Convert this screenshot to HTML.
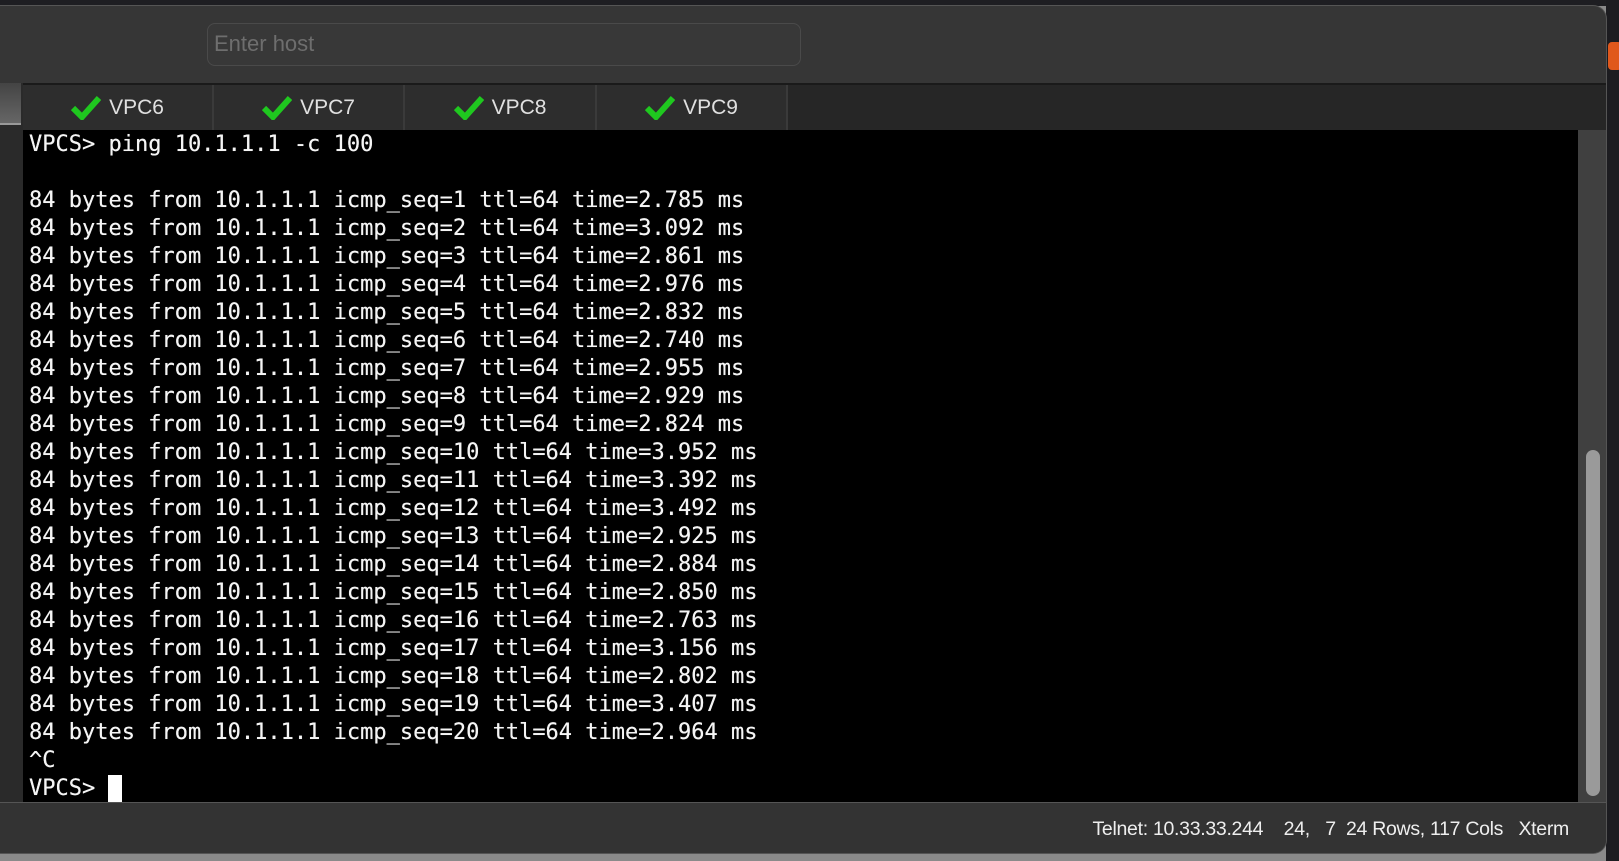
<!DOCTYPE html>
<html><head><meta charset="utf-8"><style>
*{margin:0;padding:0;box-sizing:border-box}
html,body{width:1619px;height:861px;overflow:hidden;background:#8a8a8a;font-family:"Liberation Sans",sans-serif}
.top{position:absolute;left:0;top:0;width:1619px;height:6px;background:#1e1e22}
.right{position:absolute;left:1606px;top:0;width:13px;height:861px;background:#1c1c20}
.win{position:absolute;left:0;top:5px;width:1607px;height:849px;background:#363636;border-radius:0 14px 14px 0;overflow:hidden;border:1px solid #555;border-left:none}
.input{position:absolute;left:207px;top:17px;width:594px;height:43px;border:1px solid #4a4a4a;border-radius:8px;background:#383838;color:#6e6e6e;font-size:22px;padding:7px 6px}
.tabbar{position:absolute;left:0;top:77px;width:1607px;height:47px;background:#262626;border-top:2px solid #1a1a1a}
.tab{position:absolute;top:0;height:45px;background:#2d2d2d;border-right:2px solid #3a3a3a;color:#e0e0e0;font-size:21px;display:flex;align-items:center;justify-content:center;gap:8px}
.side{position:absolute;left:0;top:77px;width:23px;height:724px;background:#2a2a2a}
.term{position:absolute;left:23px;top:124px;width:1555px;height:672px;background:#000;color:#f5f5f5;font-family:"DejaVu Sans Mono",monospace;font-size:22px;line-height:28px;white-space:pre;padding-left:6px;padding-top:1px;text-shadow:0 0 0.4px #fff}
.sb{position:absolute;left:1578px;top:124px;width:29px;height:672px;background:#404040}
.thumb{position:absolute;left:8px;top:320px;width:14px;height:346px;background:#9a9a9a;border-radius:7px}
.status{position:absolute;left:0;top:796px;width:1607px;height:53px;background:#333;border-top:1px solid #555;color:#eee;font-size:19.5px;letter-spacing:-0.3px;text-align:right;padding:15px 38px 0 0;white-space:pre}
.cur{display:inline-block;width:14px;height:28px;background:#fff;vertical-align:top}
</style></head><body>
<div class="top"></div>
<div class="right"><div style="position:absolute;left:2px;top:42px;width:14px;height:28px;background:#e0581c;border-radius:4px"></div></div>
<div class="win">
<div class="input">Enter host</div>
<div class="tabbar">
<div class="tab" style="left:23px;width:191px"><svg width="30" height="24" viewBox="0 0 30 24"><path d="M2 12 L11 21 L28 2" stroke="#1fc81f" stroke-width="6" fill="none"/></svg>VPC6</div>
<div class="tab" style="left:214px;width:191px"><svg width="30" height="24" viewBox="0 0 30 24"><path d="M2 12 L11 21 L28 2" stroke="#1fc81f" stroke-width="6" fill="none"/></svg>VPC7</div>
<div class="tab" style="left:405px;width:192px"><svg width="30" height="24" viewBox="0 0 30 24"><path d="M2 12 L11 21 L28 2" stroke="#1fc81f" stroke-width="6" fill="none"/></svg>VPC8</div>
<div class="tab" style="left:597px;width:191px"><svg width="30" height="24" viewBox="0 0 30 24"><path d="M2 12 L11 21 L28 2" stroke="#1fc81f" stroke-width="6" fill="none"/></svg>VPC9</div>
</div>
<div class="side"><div style="position:absolute;left:0;top:0;width:21px;height:42px;background:linear-gradient(#444,#666);border-bottom:2px solid #999"></div></div>
<div class="term">VPCS&gt; ping 10.1.1.1 -c 100

84 bytes from 10.1.1.1 icmp_seq=1 ttl=64 time=2.785 ms
84 bytes from 10.1.1.1 icmp_seq=2 ttl=64 time=3.092 ms
84 bytes from 10.1.1.1 icmp_seq=3 ttl=64 time=2.861 ms
84 bytes from 10.1.1.1 icmp_seq=4 ttl=64 time=2.976 ms
84 bytes from 10.1.1.1 icmp_seq=5 ttl=64 time=2.832 ms
84 bytes from 10.1.1.1 icmp_seq=6 ttl=64 time=2.740 ms
84 bytes from 10.1.1.1 icmp_seq=7 ttl=64 time=2.955 ms
84 bytes from 10.1.1.1 icmp_seq=8 ttl=64 time=2.929 ms
84 bytes from 10.1.1.1 icmp_seq=9 ttl=64 time=2.824 ms
84 bytes from 10.1.1.1 icmp_seq=10 ttl=64 time=3.952 ms
84 bytes from 10.1.1.1 icmp_seq=11 ttl=64 time=3.392 ms
84 bytes from 10.1.1.1 icmp_seq=12 ttl=64 time=3.492 ms
84 bytes from 10.1.1.1 icmp_seq=13 ttl=64 time=2.925 ms
84 bytes from 10.1.1.1 icmp_seq=14 ttl=64 time=2.884 ms
84 bytes from 10.1.1.1 icmp_seq=15 ttl=64 time=2.850 ms
84 bytes from 10.1.1.1 icmp_seq=16 ttl=64 time=2.763 ms
84 bytes from 10.1.1.1 icmp_seq=17 ttl=64 time=3.156 ms
84 bytes from 10.1.1.1 icmp_seq=18 ttl=64 time=2.802 ms
84 bytes from 10.1.1.1 icmp_seq=19 ttl=64 time=3.407 ms
84 bytes from 10.1.1.1 icmp_seq=20 ttl=64 time=2.964 ms
^C
VPCS&gt; <span class="cur"></span></div>
<div class="sb"><div class="thumb"></div></div>
<div class="status">Telnet: 10.33.33.244    24,   7  24 Rows, 117 Cols   Xterm</div>
</div>
</body></html>
